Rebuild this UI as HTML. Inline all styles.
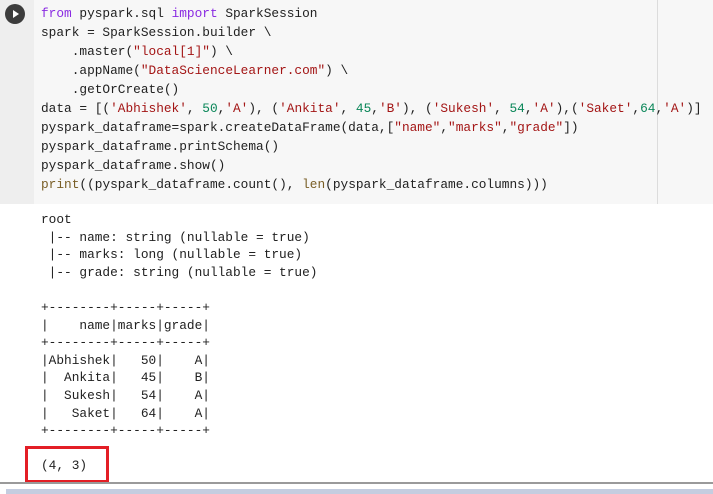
<!DOCTYPE html>
<html><head><style>
body{margin:0;width:713px;height:494px;background:#fff;position:relative;overflow:hidden;font-family:"Liberation Mono",monospace;}
.gut{position:absolute;left:0;top:0;width:34px;height:204px;background:#eeeeee;}
.code{position:absolute;left:34px;top:0;width:679px;height:204px;background:#f7f7f7;}
.rule{position:absolute;left:657px;top:0;width:1px;height:204px;background:#dcdcdc;}
.play{position:absolute;left:5px;top:4px;width:20px;height:20px;border-radius:50%;background:#3c3c3c;}
.play:after{content:"";position:absolute;left:8px;top:6px;border-left:6px solid #fff;border-top:4px solid transparent;border-bottom:4px solid transparent;}
pre{margin:0;position:absolute;left:41px;font-family:"Liberation Mono",monospace;font-size:12.8px;}
.c{top:4px;line-height:19px;color:#212121;}
.o{top:211px;line-height:17.6px;color:#212121;}
.k{color:#8a2be2}.s{color:#a31515}.n{color:#098658}.b{color:#795e26}
.box{position:absolute;left:25px;top:446px;width:78px;height:31px;border:3px solid #e31e26;}
.sh{position:absolute;left:0;top:482px;width:713px;height:2px;background:#9a9a9a;}
.bar{position:absolute;left:6px;top:489px;width:707px;height:5px;background:#c5cde0;}
</style></head><body>
<div class="gut"></div><div class="code"></div><div class="rule"></div><div class="play"></div>
<pre class="c"><span class="k">from</span> pyspark.sql <span class="k">import</span> SparkSession
spark = SparkSession.builder \
    .master(<span class="s">"local[1]"</span>) \
    .appName(<span class="s">"DataScienceLearner.com"</span>) \
    .getOrCreate()
data = [(<span class="s">'Abhishek'</span>, <span class="n">50</span>,<span class="s">'A'</span>), (<span class="s">'Ankita'</span>, <span class="n">45</span>,<span class="s">'B'</span>), (<span class="s">'Sukesh'</span>, <span class="n">54</span>,<span class="s">'A'</span>),(<span class="s">'Saket'</span>,<span class="n">64</span>,<span class="s">'A'</span>)]
pyspark_dataframe=spark.createDataFrame(data,[<span class="s">"name"</span>,<span class="s">"marks"</span>,<span class="s">"grade"</span>])
pyspark_dataframe.printSchema()
pyspark_dataframe.show()
<span class="b">print</span>((pyspark_dataframe.count(), <span class="b">len</span>(pyspark_dataframe.columns)))</pre>
<pre class="o">root
 |-- name: string (nullable = true)
 |-- marks: long (nullable = true)
 |-- grade: string (nullable = true)

+--------+-----+-----+
|    name|marks|grade|
+--------+-----+-----+
|Abhishek|   50|    A|
|  Ankita|   45|    B|
|  Sukesh|   54|    A|
|   Saket|   64|    A|
+--------+-----+-----+

(4, 3)</pre>
<div class="box"></div><div class="sh"></div><div class="bar"></div>
</body></html>
